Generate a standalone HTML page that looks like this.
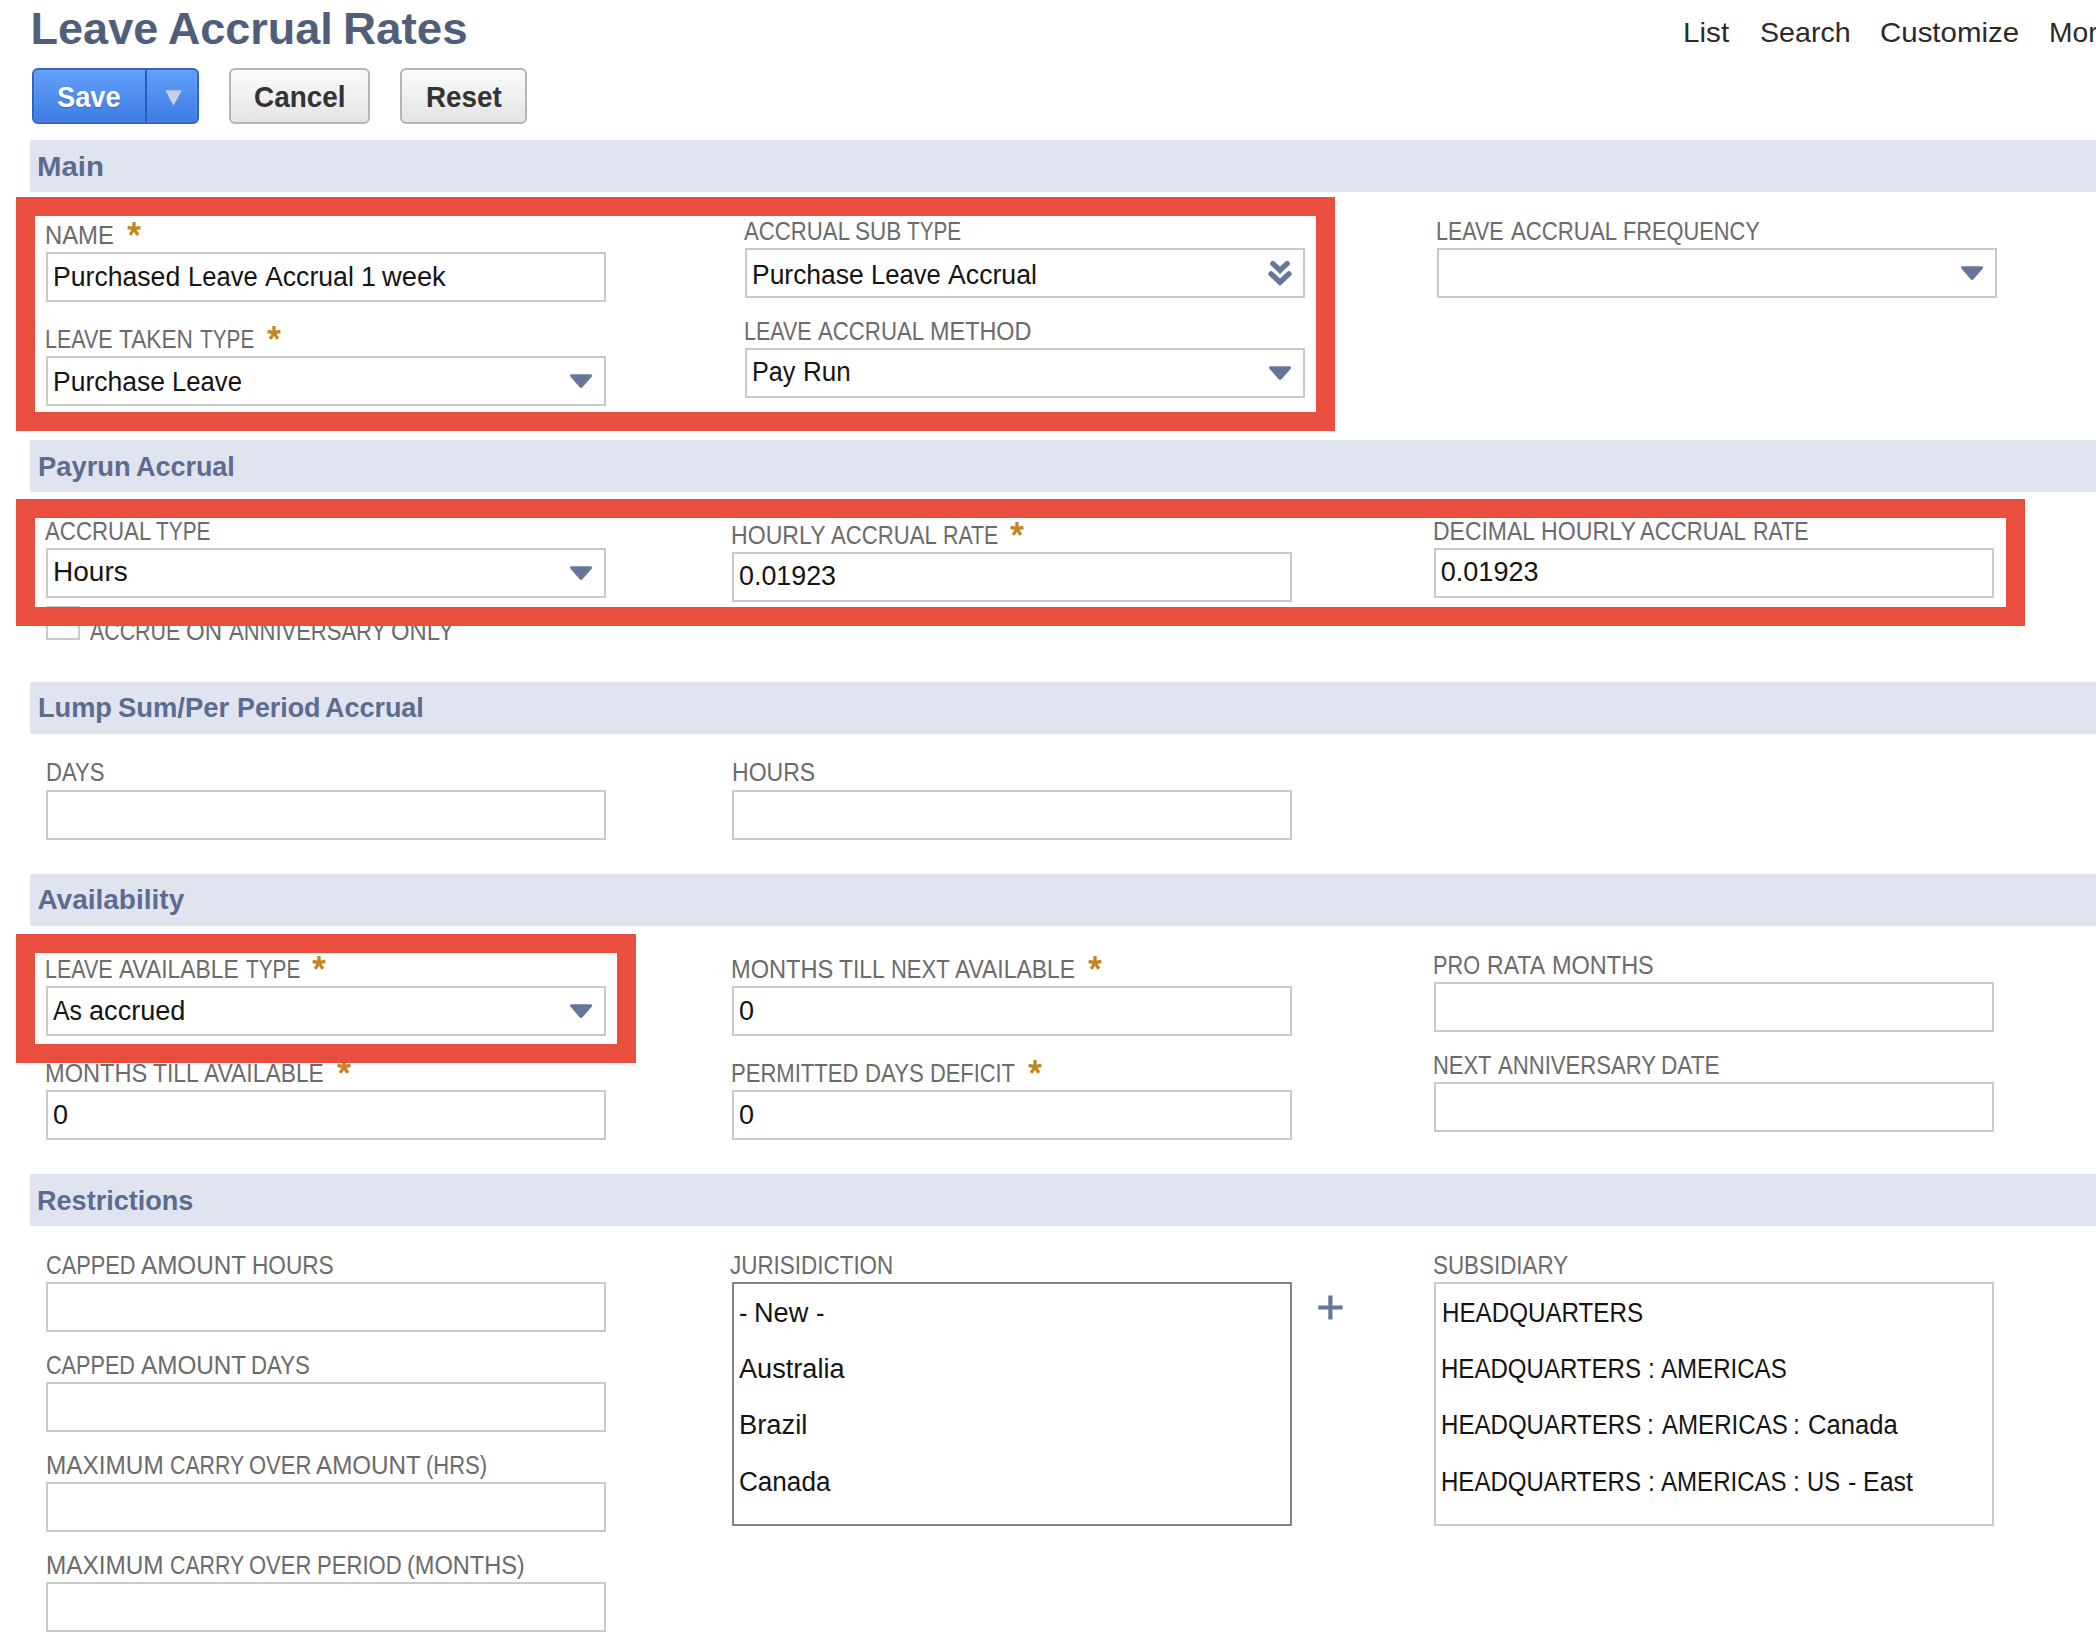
<!DOCTYPE html>
<html><head><meta charset="utf-8"><title>Leave Accrual Rates</title>
<style>
html,body{margin:0;padding:0;background:#fff;width:2096px;height:1648px;overflow:hidden}
#pg{position:absolute;left:0;top:0;width:2096px;height:1648px;overflow:hidden;background:#fff;font-family:"Liberation Sans",sans-serif}
.t{position:absolute;white-space:nowrap;line-height:1;transform-origin:0 0;font-family:"Liberation Sans",sans-serif}
.band{position:absolute;left:30px;right:0;background:#e0e4ee}
.in{position:absolute;border:2px solid #c9c9c9;background:#fff}
.red{position:absolute;border-style:solid;border-color:#ea4e3e;z-index:5}
.a{position:absolute;overflow:visible}
.btn{position:absolute;border-radius:6px}
.save{border:2px solid #2f64c6;background:linear-gradient(#62a0fa,#3f7ce2);box-shadow:inset 0 0 0 1px rgba(255,255,255,.08)}
.gray{border:2px solid #b5b5b5;background:linear-gradient(#fbfbfb,#e4e4e4)}
</style></head><body><div id="pg">
<div class="band" style="top:140px;height:52px"></div>
<div class="band" style="top:440px;height:52px"></div>
<div class="band" style="top:682px;height:52px"></div>
<div class="band" style="top:874px;height:52px"></div>
<div class="band" style="top:1174px;height:52px"></div>
<div class="btn save" style="left:32px;top:68px;width:163px;height:52px"></div>
<div style="position:absolute;left:145px;top:70px;width:2px;height:52px;background:#2b5dbc"></div>
<svg class="a" style="left:164.5px;top:89.5px" width="17" height="16" viewBox="0 0 17 16"><path d="M0.3 0.3 H16.7 L8.5 15.7 Z" fill="#c6d1e6"/></svg>
<div class="btn gray" style="left:229px;top:68px;width:137px;height:52px"></div>
<div class="btn gray" style="left:400px;top:68px;width:123px;height:52px"></div>
<div class="in" style="left:46px;top:252px;width:556px;height:46px;"></div>
<div class="in" style="left:46px;top:356px;width:556px;height:46px;"></div>
<div class="in" style="left:745px;top:248px;width:556px;height:46px;"></div>
<div class="in" style="left:745px;top:348px;width:556px;height:46px;"></div>
<div class="in" style="left:1437px;top:248px;width:556px;height:46px;"></div>
<div class="in" style="left:46px;top:548px;width:556px;height:46px;"></div>
<div class="in" style="left:732px;top:552px;width:556px;height:46px;"></div>
<div class="in" style="left:1434px;top:548px;width:556px;height:46px;"></div>
<div class="in" style="left:46px;top:606px;width:30px;height:30px;"></div>
<div class="in" style="left:46px;top:790px;width:556px;height:46px;"></div>
<div class="in" style="left:732px;top:790px;width:556px;height:46px;"></div>
<div class="in" style="left:46px;top:986px;width:556px;height:46px;"></div>
<div class="in" style="left:732px;top:986px;width:556px;height:46px;"></div>
<div class="in" style="left:1434px;top:982px;width:556px;height:46px;"></div>
<div class="in" style="left:46px;top:1090px;width:556px;height:46px;"></div>
<div class="in" style="left:732px;top:1090px;width:556px;height:46px;"></div>
<div class="in" style="left:1434px;top:1082px;width:556px;height:46px;"></div>
<div class="in" style="left:46px;top:1282px;width:556px;height:46px;"></div>
<div class="in" style="left:46px;top:1382px;width:556px;height:46px;"></div>
<div class="in" style="left:46px;top:1482px;width:556px;height:46px;"></div>
<div class="in" style="left:46px;top:1582px;width:556px;height:46px;"></div>
<div class="in" style="left:732px;top:1282px;width:556px;height:240px;border-color:#858585"></div>
<div class="in" style="left:1434px;top:1282px;width:556px;height:240px;"></div>
<svg class="a" style="left:569px;top:373.6px" width="24.2" height="14.2" viewBox="0 0 24.4 14.8"><path d="M3 0.2 H21.4 Q25.2 0.4 23 3.2 L13.9 13.6 Q12.2 15.4 10.5 13.6 L1.4 3.2 Q-0.8 0.4 3 0.2 Z" fill="#64779a"/></svg>
<svg class="a" style="left:1267.9px;top:365.7px" width="24.2" height="14.2" viewBox="0 0 24.4 14.8"><path d="M3 0.2 H21.4 Q25.2 0.4 23 3.2 L13.9 13.6 Q12.2 15.4 10.5 13.6 L1.4 3.2 Q-0.8 0.4 3 0.2 Z" fill="#64779a"/></svg>
<svg class="a" style="left:1959.8px;top:265.6px" width="24.2" height="14.2" viewBox="0 0 24.4 14.8"><path d="M3 0.2 H21.4 Q25.2 0.4 23 3.2 L13.9 13.6 Q12.2 15.4 10.5 13.6 L1.4 3.2 Q-0.8 0.4 3 0.2 Z" fill="#64779a"/></svg>
<svg class="a" style="left:569px;top:565.9px" width="24.2" height="14.2" viewBox="0 0 24.4 14.8"><path d="M3 0.2 H21.4 Q25.2 0.4 23 3.2 L13.9 13.6 Q12.2 15.4 10.5 13.6 L1.4 3.2 Q-0.8 0.4 3 0.2 Z" fill="#64779a"/></svg>
<svg class="a" style="left:569px;top:1004px" width="24.2" height="14.2" viewBox="0 0 24.4 14.8"><path d="M3 0.2 H21.4 Q25.2 0.4 23 3.2 L13.9 13.6 Q12.2 15.4 10.5 13.6 L1.4 3.2 Q-0.8 0.4 3 0.2 Z" fill="#64779a"/></svg>
<svg class="a" style="left:1266px;top:258px" width="28" height="29" viewBox="0 0 28 29"><g fill="none" stroke="#64779a" stroke-width="5.4" stroke-linecap="round" stroke-linejoin="miter"><path d="M6.9 5.6 L14 12.3 L21.1 5.6"/><path d="M5.1 15.9 L14 24.2 L22.9 15.9"/></g></svg>
<svg class="a" style="left:1317.5px;top:1294.5px" width="25" height="25" viewBox="0 0 25 25"><path d="M12.4 0.4 V24.6 M0.3 12.5 H24.6" stroke="#64779a" stroke-width="4.2" fill="none"/></svg>
<svg class="a" style="left:125.80px;top:220.90px" width="16" height="16" viewBox="-8 -8 16 16"><g stroke="#c4861f" stroke-width="3.3" stroke-linecap="butt"><line x1="0" y1="0.6" x2="0" y2="-7"/><line x1="0.6" y1="-0.3" x2="-6.4" y2="-1.5"/><line x1="-0.6" y1="-0.3" x2="6.4" y2="-1.5"/><line x1="0.4" y1="-0.6" x2="-3.9" y2="5.9"/><line x1="-0.4" y1="-0.6" x2="3.9" y2="5.9"/></g></svg>
<svg class="a" style="left:265.50px;top:325.10px" width="16" height="16" viewBox="-8 -8 16 16"><g stroke="#c4861f" stroke-width="3.3" stroke-linecap="butt"><line x1="0" y1="0.6" x2="0" y2="-7"/><line x1="0.6" y1="-0.3" x2="-6.4" y2="-1.5"/><line x1="-0.6" y1="-0.3" x2="6.4" y2="-1.5"/><line x1="0.4" y1="-0.6" x2="-3.9" y2="5.9"/><line x1="-0.4" y1="-0.6" x2="3.9" y2="5.9"/></g></svg>
<svg class="a" style="left:1008.90px;top:521.00px" width="16" height="16" viewBox="-8 -8 16 16"><g stroke="#c4861f" stroke-width="3.3" stroke-linecap="butt"><line x1="0" y1="0.6" x2="0" y2="-7"/><line x1="0.6" y1="-0.3" x2="-6.4" y2="-1.5"/><line x1="-0.6" y1="-0.3" x2="6.4" y2="-1.5"/><line x1="0.4" y1="-0.6" x2="-3.9" y2="5.9"/><line x1="-0.4" y1="-0.6" x2="3.9" y2="5.9"/></g></svg>
<svg class="a" style="left:311.00px;top:955.00px" width="16" height="16" viewBox="-8 -8 16 16"><g stroke="#c4861f" stroke-width="3.3" stroke-linecap="butt"><line x1="0" y1="0.6" x2="0" y2="-7"/><line x1="0.6" y1="-0.3" x2="-6.4" y2="-1.5"/><line x1="-0.6" y1="-0.3" x2="6.4" y2="-1.5"/><line x1="0.4" y1="-0.6" x2="-3.9" y2="5.9"/><line x1="-0.4" y1="-0.6" x2="3.9" y2="5.9"/></g></svg>
<svg class="a" style="left:1086.70px;top:955.00px" width="16" height="16" viewBox="-8 -8 16 16"><g stroke="#c4861f" stroke-width="3.3" stroke-linecap="butt"><line x1="0" y1="0.6" x2="0" y2="-7"/><line x1="0.6" y1="-0.3" x2="-6.4" y2="-1.5"/><line x1="-0.6" y1="-0.3" x2="6.4" y2="-1.5"/><line x1="0.4" y1="-0.6" x2="-3.9" y2="5.9"/><line x1="-0.4" y1="-0.6" x2="3.9" y2="5.9"/></g></svg>
<svg class="a" style="left:336.00px;top:1059.20px" width="16" height="16" viewBox="-8 -8 16 16"><g stroke="#c4861f" stroke-width="3.3" stroke-linecap="butt"><line x1="0" y1="0.6" x2="0" y2="-7"/><line x1="0.6" y1="-0.3" x2="-6.4" y2="-1.5"/><line x1="-0.6" y1="-0.3" x2="6.4" y2="-1.5"/><line x1="0.4" y1="-0.6" x2="-3.9" y2="5.9"/><line x1="-0.4" y1="-0.6" x2="3.9" y2="5.9"/></g></svg>
<svg class="a" style="left:1026.60px;top:1059.20px" width="16" height="16" viewBox="-8 -8 16 16"><g stroke="#c4861f" stroke-width="3.3" stroke-linecap="butt"><line x1="0" y1="0.6" x2="0" y2="-7"/><line x1="0.6" y1="-0.3" x2="-6.4" y2="-1.5"/><line x1="-0.6" y1="-0.3" x2="6.4" y2="-1.5"/><line x1="0.4" y1="-0.6" x2="-3.9" y2="5.9"/><line x1="-0.4" y1="-0.6" x2="3.9" y2="5.9"/></g></svg>
<div class="t" style="left:30.60px;top:5.50px;font-size:45px;font-weight:700;color:#4f5f7b;">Leave</div>
<div class="t" style="left:167.73px;top:5.50px;font-size:45px;font-weight:700;color:#4f5f7b;">Accrual</div>
<div class="t" style="left:343.45px;top:5.50px;font-size:45px;font-weight:700;color:#4f5f7b;transform:scaleX(1.0163);">Rates</div>
<div class="t" style="left:1682.96px;top:18.00px;font-size:28.5px;color:#2a2a2a;transform:scaleX(1.0413);">List</div>
<div class="t" style="left:1759.80px;top:18.00px;font-size:28.5px;color:#2a2a2a;transform:scaleX(1.0039);">Search</div>
<div class="t" style="left:1880.39px;top:18.00px;font-size:28.5px;color:#2a2a2a;transform:scaleX(1.0329);">Customize</div>
<div class="t" style="left:2049.09px;top:18.00px;font-size:28.5px;color:#2a2a2a;transform:scaleX(0.9900);">More</div>
<div class="t" style="left:57.39px;top:81.90px;font-size:30px;font-weight:700;color:#ffffff;transform:scaleX(0.9089);text-shadow:0 1px 1px rgba(0,0,0,.25);">Save</div>
<div class="t" style="left:254.14px;top:81.90px;font-size:30px;font-weight:700;color:#333333;transform:scaleX(0.9306);">Cancel</div>
<div class="t" style="left:425.80px;top:81.90px;font-size:30px;font-weight:700;color:#333333;transform:scaleX(0.9268);">Reset</div>
<div class="t" style="left:37.06px;top:153.00px;font-size:28px;font-weight:700;color:#5a6c8f;transform:scaleX(1.0484);">Main</div>
<div class="t" style="left:38.08px;top:453.00px;font-size:28px;font-weight:700;color:#5a6c8f;transform:scaleX(0.9766);">Payrun</div>
<div class="t" style="left:136.04px;top:453.00px;font-size:28px;font-weight:700;color:#5a6c8f;transform:scaleX(0.9622);">Accrual</div>
<div class="t" style="left:37.50px;top:694.30px;font-size:28px;font-weight:700;color:#5a6c8f;transform:scaleX(0.9703);">Lump</div>
<div class="t" style="left:118.34px;top:694.30px;font-size:28px;font-weight:700;color:#5a6c8f;transform:scaleX(0.9781);">Sum/Per</div>
<div class="t" style="left:236.55px;top:694.30px;font-size:28px;font-weight:700;color:#5a6c8f;transform:scaleX(0.9580);">Period</div>
<div class="t" style="left:325.24px;top:694.30px;font-size:28px;font-weight:700;color:#5a6c8f;transform:scaleX(0.9622);">Accrual</div>
<div class="t" style="left:37.42px;top:886.40px;font-size:28px;font-weight:700;color:#5a6c8f;">Availability</div>
<div class="t" style="left:37.30px;top:1186.70px;font-size:28px;font-weight:700;color:#5a6c8f;transform:scaleX(0.9662);">Restrictions</div>
<div class="t" style="left:45.39px;top:222.80px;font-size:25px;color:#6b6b6b;transform:scaleX(0.9534);">NAME</div>
<div class="t" style="left:44.99px;top:327.00px;font-size:25px;color:#6b6b6b;transform:scaleX(0.8575);">LEAVE</div>
<div class="t" style="left:119.31px;top:327.00px;font-size:25px;color:#6b6b6b;transform:scaleX(0.9075);">TAKEN</div>
<div class="t" style="left:199.56px;top:327.00px;font-size:25px;color:#6b6b6b;transform:scaleX(0.8309);">TYPE</div>
<div class="t" style="left:743.94px;top:218.80px;font-size:25px;color:#6b6b6b;transform:scaleX(0.8872);">ACCRUAL</div>
<div class="t" style="left:855.39px;top:218.80px;font-size:25px;color:#6b6b6b;transform:scaleX(0.8996);">SUB</div>
<div class="t" style="left:907.41px;top:218.80px;font-size:25px;color:#6b6b6b;transform:scaleX(0.8296);">TYPE</div>
<div class="t" style="left:743.99px;top:319.00px;font-size:25px;color:#6b6b6b;transform:scaleX(0.8564);">LEAVE</div>
<div class="t" style="left:818.49px;top:319.00px;font-size:25px;color:#6b6b6b;transform:scaleX(0.8878);">ACCRUAL</div>
<div class="t" style="left:930.03px;top:319.00px;font-size:25px;color:#6b6b6b;transform:scaleX(0.9369);">METHOD</div>
<div class="t" style="left:1435.99px;top:218.80px;font-size:25px;color:#6b6b6b;transform:scaleX(0.8581);">LEAVE</div>
<div class="t" style="left:1510.63px;top:218.80px;font-size:25px;color:#6b6b6b;transform:scaleX(0.8875);">ACCRUAL</div>
<div class="t" style="left:1622.56px;top:218.80px;font-size:25px;color:#6b6b6b;transform:scaleX(0.8722);">FREQUENCY</div>
<div class="t" style="left:44.94px;top:518.50px;font-size:25px;color:#6b6b6b;transform:scaleX(0.8894);">ACCRUAL</div>
<div class="t" style="left:156.46px;top:518.50px;font-size:25px;color:#6b6b6b;transform:scaleX(0.8336);">TYPE</div>
<div class="t" style="left:730.85px;top:522.90px;font-size:25px;color:#6b6b6b;transform:scaleX(0.9241);">HOURLY</div>
<div class="t" style="left:831.01px;top:522.90px;font-size:25px;color:#6b6b6b;transform:scaleX(0.8846);">ACCRUAL</div>
<div class="t" style="left:942.56px;top:522.90px;font-size:25px;color:#6b6b6b;transform:scaleX(0.8539);">RATE</div>
<div class="t" style="left:1432.85px;top:518.50px;font-size:25px;color:#6b6b6b;transform:scaleX(0.9183);">DECIMAL</div>
<div class="t" style="left:1540.62px;top:518.50px;font-size:25px;color:#6b6b6b;transform:scaleX(0.9272);">HOURLY</div>
<div class="t" style="left:1640.36px;top:518.50px;font-size:25px;color:#6b6b6b;transform:scaleX(0.8851);">ACCRUAL</div>
<div class="t" style="left:1752.58px;top:518.50px;font-size:25px;color:#6b6b6b;transform:scaleX(0.8556);">RATE</div>
<div class="t" style="left:89.54px;top:618.70px;font-size:25px;color:#6b6b6b;transform:scaleX(0.8546);">ACCRUE</div>
<div class="t" style="left:186.30px;top:618.70px;font-size:25px;color:#6b6b6b;transform:scaleX(0.9633);">ON</div>
<div class="t" style="left:228.93px;top:618.70px;font-size:25px;color:#6b6b6b;transform:scaleX(0.8796);">ANNIVERSARY</div>
<div class="t" style="left:391.45px;top:618.70px;font-size:25px;color:#6b6b6b;transform:scaleX(0.9533);">ONLY</div>
<div class="t" style="left:45.74px;top:760.40px;font-size:25px;color:#6b6b6b;transform:scaleX(0.8830);">DAYS</div>
<div class="t" style="left:731.52px;top:760.40px;font-size:25px;color:#6b6b6b;transform:scaleX(0.9215);">HOURS</div>
<div class="t" style="left:44.99px;top:956.90px;font-size:25px;color:#6b6b6b;transform:scaleX(0.8576);">LEAVE</div>
<div class="t" style="left:119.41px;top:956.90px;font-size:25px;color:#6b6b6b;transform:scaleX(0.9127);">AVAILABLE</div>
<div class="t" style="left:245.69px;top:956.90px;font-size:25px;color:#6b6b6b;transform:scaleX(0.8309);">TYPE</div>
<div class="t" style="left:730.82px;top:956.90px;font-size:25px;color:#6b6b6b;transform:scaleX(0.9441);">MONTHS</div>
<div class="t" style="left:839.29px;top:956.90px;font-size:25px;color:#6b6b6b;transform:scaleX(0.9164);">TILL</div>
<div class="t" style="left:891.10px;top:956.90px;font-size:25px;color:#6b6b6b;transform:scaleX(0.8781);">NEXT</div>
<div class="t" style="left:954.87px;top:956.90px;font-size:25px;color:#6b6b6b;transform:scaleX(0.9145);">AVAILABLE</div>
<div class="t" style="left:1432.98px;top:952.90px;font-size:25px;color:#6b6b6b;transform:scaleX(0.8675);">PRO</div>
<div class="t" style="left:1487.32px;top:952.90px;font-size:25px;color:#6b6b6b;transform:scaleX(0.9223);">RATA</div>
<div class="t" style="left:1551.55px;top:952.90px;font-size:25px;color:#6b6b6b;transform:scaleX(0.9397);">MONTHS</div>
<div class="t" style="left:44.82px;top:1061.10px;font-size:25px;color:#6b6b6b;transform:scaleX(0.9440);">MONTHS</div>
<div class="t" style="left:153.27px;top:1061.10px;font-size:25px;color:#6b6b6b;transform:scaleX(0.9162);">TILL</div>
<div class="t" style="left:204.31px;top:1061.10px;font-size:25px;color:#6b6b6b;transform:scaleX(0.9143);">AVAILABLE</div>
<div class="t" style="left:730.95px;top:1061.10px;font-size:25px;color:#6b6b6b;transform:scaleX(0.8820);">PERMITTED</div>
<div class="t" style="left:865.25px;top:1061.10px;font-size:25px;color:#6b6b6b;transform:scaleX(0.8872);">DAYS</div>
<div class="t" style="left:930.32px;top:1061.10px;font-size:25px;color:#6b6b6b;transform:scaleX(0.8727);">DEFICIT</div>
<div class="t" style="left:1432.95px;top:1052.70px;font-size:25px;color:#6b6b6b;transform:scaleX(0.8768);">NEXT</div>
<div class="t" style="left:1497.62px;top:1052.70px;font-size:25px;color:#6b6b6b;transform:scaleX(0.8835);">ANNIVERSARY</div>
<div class="t" style="left:1660.98px;top:1052.70px;font-size:25px;color:#6b6b6b;transform:scaleX(0.9055);">DATE</div>
<div class="t" style="left:45.72px;top:1253.10px;font-size:25px;color:#6b6b6b;transform:scaleX(0.8693);">CAPPED</div>
<div class="t" style="left:141.42px;top:1253.10px;font-size:25px;color:#6b6b6b;transform:scaleX(0.9694);">AMOUNT</div>
<div class="t" style="left:251.98px;top:1253.10px;font-size:25px;color:#6b6b6b;transform:scaleX(0.9049);">HOURS</div>
<div class="t" style="left:45.73px;top:1353.00px;font-size:25px;color:#6b6b6b;transform:scaleX(0.8652);">CAPPED</div>
<div class="t" style="left:141.18px;top:1353.00px;font-size:25px;color:#6b6b6b;transform:scaleX(0.9705);">AMOUNT</div>
<div class="t" style="left:251.28px;top:1353.00px;font-size:25px;color:#6b6b6b;transform:scaleX(0.8895);">DAYS</div>
<div class="t" style="left:45.71px;top:1453.20px;font-size:25px;color:#6b6b6b;transform:scaleX(0.9739);">MAXIMUM</div>
<div class="t" style="left:169.63px;top:1453.20px;font-size:25px;color:#6b6b6b;transform:scaleX(0.8523);">CARRY</div>
<div class="t" style="left:249.41px;top:1453.20px;font-size:25px;color:#6b6b6b;transform:scaleX(0.8794);">OVER</div>
<div class="t" style="left:316.18px;top:1453.20px;font-size:25px;color:#6b6b6b;transform:scaleX(0.9679);">AMOUNT</div>
<div class="t" style="left:426.30px;top:1453.20px;font-size:25px;color:#6b6b6b;transform:scaleX(0.8798);">(HRS)</div>
<div class="t" style="left:45.71px;top:1553.40px;font-size:25px;color:#6b6b6b;transform:scaleX(0.9737);">MAXIMUM</div>
<div class="t" style="left:169.61px;top:1553.40px;font-size:25px;color:#6b6b6b;transform:scaleX(0.8522);">CARRY</div>
<div class="t" style="left:249.37px;top:1553.40px;font-size:25px;color:#6b6b6b;transform:scaleX(0.8793);">OVER</div>
<div class="t" style="left:317.00px;top:1553.40px;font-size:25px;color:#6b6b6b;transform:scaleX(0.8841);">PERIOD</div>
<div class="t" style="left:407.44px;top:1553.40px;font-size:25px;color:#6b6b6b;transform:scaleX(0.9419);">(MONTHS)</div>
<div class="t" style="left:730.19px;top:1253.10px;font-size:25px;color:#6b6b6b;transform:scaleX(0.8973);">JURISIDICTION</div>
<div class="t" style="left:1433.16px;top:1253.10px;font-size:25px;color:#6b6b6b;transform:scaleX(0.8950);">SUBSIDIARY</div>
<div class="t" style="left:52.85px;top:263.80px;font-size:27px;color:#141414;transform:scaleX(0.9854);">Purchased</div>
<div class="t" style="left:188.12px;top:263.80px;font-size:27px;color:#141414;transform:scaleX(0.9465);">Leave</div>
<div class="t" style="left:264.58px;top:263.80px;font-size:27px;color:#141414;transform:scaleX(0.9868);">Accrual</div>
<div class="t" style="left:360.74px;top:263.80px;font-size:27px;color:#141414;transform:scaleX(0.9889);">1</div>
<div class="t" style="left:381.80px;top:263.80px;font-size:27px;color:#141414;transform:scaleX(1.0113);">week</div>
<div class="t" style="left:52.87px;top:369.40px;font-size:27px;color:#141414;transform:scaleX(0.9816);">Purchase</div>
<div class="t" style="left:172.37px;top:369.40px;font-size:27px;color:#141414;transform:scaleX(0.9512);">Leave</div>
<div class="t" style="left:751.90px;top:261.90px;font-size:27px;color:#141414;transform:scaleX(0.9791);">Purchase</div>
<div class="t" style="left:871.12px;top:261.90px;font-size:27px;color:#141414;transform:scaleX(0.9492);">Leave</div>
<div class="t" style="left:948.07px;top:261.90px;font-size:27px;color:#141414;transform:scaleX(0.9883);">Accrual</div>
<div class="t" style="left:752.06px;top:358.70px;font-size:27px;color:#141414;transform:scaleX(0.9323);">Pay</div>
<div class="t" style="left:803.16px;top:358.70px;font-size:27px;color:#141414;transform:scaleX(0.9644);">Run</div>
<div class="t" style="left:53.31px;top:559.30px;font-size:27px;color:#141414;transform:scaleX(1.0377);">Hours</div>
<div class="t" style="left:738.66px;top:563.30px;font-size:27px;color:#141414;transform:scaleX(0.9942);">0.01923</div>
<div class="t" style="left:1440.83px;top:559.30px;font-size:27px;color:#141414;">0.01923</div>
<div class="t" style="left:53.25px;top:997.60px;font-size:27px;color:#141414;transform:scaleX(0.9203);">As</div>
<div class="t" style="left:89.42px;top:997.60px;font-size:27px;color:#141414;transform:scaleX(1.0041);">accrued</div>
<div class="t" style="left:53.07px;top:1101.90px;font-size:27px;color:#141414;">0</div>
<div class="t" style="left:739.05px;top:997.60px;font-size:27px;color:#141414;">0</div>
<div class="t" style="left:739.05px;top:1101.90px;font-size:27px;color:#141414;">0</div>
<div class="t" style="left:739.02px;top:1300.20px;font-size:27px;color:#141414;transform:scaleX(0.9350);">-</div>
<div class="t" style="left:754.48px;top:1300.20px;font-size:27px;color:#141414;transform:scaleX(1.0061);">New</div>
<div class="t" style="left:815.61px;top:1300.20px;font-size:27px;color:#141414;transform:scaleX(0.9350);">-</div>
<div class="t" style="left:739.25px;top:1356.30px;font-size:27px;color:#141414;transform:scaleX(1.0054);">Australia</div>
<div class="t" style="left:739.11px;top:1412.40px;font-size:27px;color:#141414;transform:scaleX(1.0135);">Brazil</div>
<div class="t" style="left:739.30px;top:1468.50px;font-size:27px;color:#141414;transform:scaleX(0.9664);">Canada</div>
<div class="t" style="left:1441.85px;top:1300.20px;font-size:27px;color:#141414;transform:scaleX(0.8952);">HEADQUARTERS</div>
<div class="t" style="left:1441.09px;top:1356.30px;font-size:27px;color:#141414;transform:scaleX(0.8906);">HEADQUARTERS</div>
<div class="t" style="left:1648.09px;top:1356.30px;font-size:27px;color:#141414;transform:scaleX(0.9243);">:</div>
<div class="t" style="left:1661.22px;top:1356.30px;font-size:27px;color:#141414;transform:scaleX(0.8912);">AMERICAS</div>
<div class="t" style="left:1441.09px;top:1412.40px;font-size:27px;color:#141414;transform:scaleX(0.8917);">HEADQUARTERS</div>
<div class="t" style="left:1647.40px;top:1412.40px;font-size:27px;color:#141414;transform:scaleX(0.9247);">:</div>
<div class="t" style="left:1661.60px;top:1412.40px;font-size:27px;color:#141414;transform:scaleX(0.8919);">AMERICAS</div>
<div class="t" style="left:1792.91px;top:1412.40px;font-size:27px;color:#141414;transform:scaleX(0.9247);">:</div>
<div class="t" style="left:1807.58px;top:1412.40px;font-size:27px;color:#141414;transform:scaleX(0.9485);">Canada</div>
<div class="t" style="left:1441.09px;top:1468.50px;font-size:27px;color:#141414;transform:scaleX(0.8905);">HEADQUARTERS</div>
<div class="t" style="left:1648.07px;top:1468.50px;font-size:27px;color:#141414;transform:scaleX(0.9243);">:</div>
<div class="t" style="left:1661.19px;top:1468.50px;font-size:27px;color:#141414;transform:scaleX(0.8911);">AMERICAS</div>
<div class="t" style="left:1793.31px;top:1468.50px;font-size:27px;color:#141414;transform:scaleX(0.9243);">:</div>
<div class="t" style="left:1807.15px;top:1468.50px;font-size:27px;color:#141414;transform:scaleX(0.8814);">US</div>
<div class="t" style="left:1847.52px;top:1468.50px;font-size:27px;color:#141414;transform:scaleX(0.9324);">-</div>
<div class="t" style="left:1863.21px;top:1468.50px;font-size:27px;color:#141414;transform:scaleX(0.9235);">East</div>
<div class="red" style="left:16px;top:197px;width:1281px;height:196px;border-width:19px"></div>
<div class="red" style="left:16px;top:499px;width:1971px;height:89px;border-width:19px"></div>
<div class="red" style="left:16px;top:934px;width:582px;height:91px;border-width:19px"></div>
</div></body></html>
